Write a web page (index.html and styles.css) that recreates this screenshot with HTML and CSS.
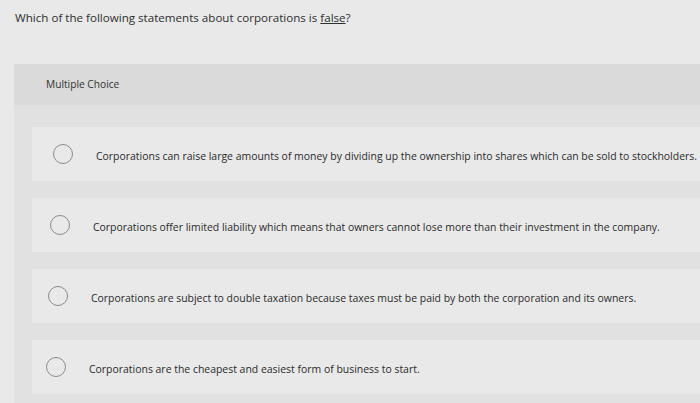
FILE: index.html
```html
<!DOCTYPE html>
<html>
<head>
<meta charset="utf-8">
<link rel="stylesheet" href="styles.css">
</head>
<body>
<div class="page">
  <h1 class="question">Which of the following statements about corporations is <u>false</u>?</h1>
  <div class="panel">
    <div class="panel-head">Multiple Choice</div>
    <div class="options">
      <div class="option opt1"><span class="radio"></span><span class="label">Corporations can raise large amounts of money by dividing up the ownership into shares which can be sold to stockholders.</span></div>
      <div class="option opt2"><span class="radio"></span><span class="label">Corporations offer limited liability which means that owners cannot lose more than their investment in the company.</span></div>
      <div class="option opt3"><span class="radio"></span><span class="label">Corporations are subject to double taxation because taxes must be paid by both the corporation and its owners.</span></div>
      <div class="option opt4"><span class="radio"></span><span class="label">Corporations are the cheapest and easiest form of business to start.</span></div>
    </div>
  </div>
</div>
</body>
</html>
```
FILE: styles.css
```css
html, body {
  margin: 0;
  padding: 0;
  background: #e8e9e8;
}
.page {
  width: 700px;
  height: 403px;
  overflow: hidden;
  font-family: "Open Sans", Lato, sans-serif;
  color: #333;
}
.question {
  margin: 0;
  padding: 9px 0 0 15px;
  font-size: 11.6px;
  font-weight: 400;
  line-height: 17px;
  color: #2f2f2f;
}
.panel {
  margin: 38px 0 0 14px;
  background: #e0e1e0;
  height: 340px;
}
.panel-head {
  height: 41px;
  box-sizing: border-box;
  padding: 13px 0 0 32px;
  background: #d9dad9;
  font-size: 10.2px;
  color: #333;
}
.options {
  display: flex;
  flex-direction: column;
  gap: 17px;
  padding: 22px 0 0 18px;
}
.option {
  display: flex;
  align-items: center;
  height: 54px;
  background: #e8e9e8;
  font-size: 10.45px;
  color: #2b2b2b;
}
.label {
  white-space: nowrap;
  padding-top: 4px;
}
.radio {
  flex: none;
  width: 18px;
  height: 18px;
  border: 1.5px solid #8a8b8a;
  border-radius: 50%;
  margin-left: 21px;
  margin-right: 23px;
}
.opt2 .radio { margin-left: 18px; }
.opt3 .radio { margin-left: 16px; }
.opt4 .radio { margin-left: 14px; }
```
